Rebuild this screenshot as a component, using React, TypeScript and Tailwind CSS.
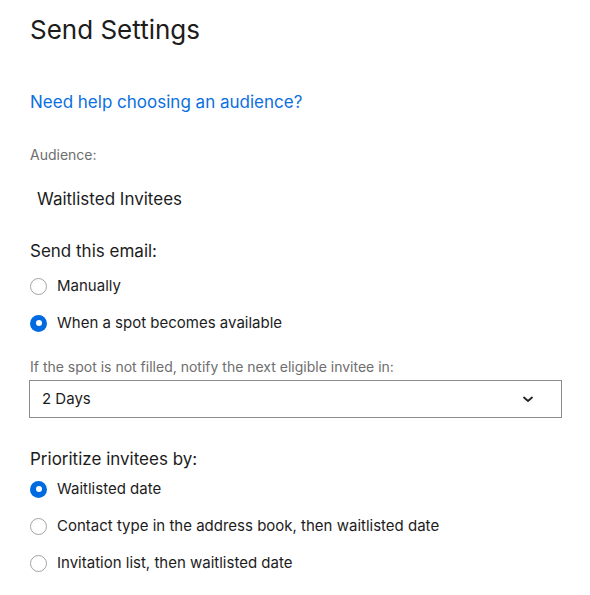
import { useState } from "react";

function Radio({ checked, label, onClick }: { checked: boolean; label: string; onClick: () => void }) {
  return (
    <label className="flex items-center gap-[10px] cursor-pointer h-[18px]" onClick={onClick}>
      {checked ? (
        <span className="w-[17px] h-[17px] rounded-full bg-[#006ae1] flex items-center justify-center shrink-0">
          <span className="w-[6px] h-[6px] rounded-full bg-white" />
        </span>
      ) : (
        <span className="w-[17px] h-[17px] rounded-full border border-[#a3a3a3] bg-white shrink-0" />
      )}
      <span className="text-[15px] text-[#1c1c1c]">{label}</span>
    </label>
  );
}

export default function App() {
  const [sendMode, setSendMode] = useState("spot");
  const [priority, setPriority] = useState("date");

  return (
    <div className="w-[590px] h-[595px] bg-white pl-[30px] pr-[28px] font-['Inter',sans-serif] text-[#1c1c1c]">
      <h1 className="pt-[14px] text-[26px] leading-[32px] font-normal">Send Settings</h1>

      <a href="#" className="block mt-[45px] text-[17px] leading-[22px] text-[#0b6fdf]">
        Need help choosing an audience?
      </a>

      <div className="mt-[33px] text-[14px] leading-[18px] text-[#6e6e6e]">Audience:</div>
      <div className="mt-[24px] pl-[7px] text-[17px] leading-[22px]">Waitlisted Invitees</div>

      <div className="mt-[30px] text-[17px] leading-[22px]">Send this email:</div>
      <div className="mt-[15px] flex flex-col gap-[19px]">
        <Radio checked={sendMode === "manual"} label="Manually" onClick={() => setSendMode("manual")} />
        <Radio checked={sendMode === "spot"} label="When a spot becomes available" onClick={() => setSendMode("spot")} />
      </div>

      <div className="mt-[26px] text-[14px] leading-[18px] text-[#6e6e6e]">
        If the spot is not filled, notify the next eligible invitee in:
      </div>
      <div className="mt-[4px] w-[533px] h-[38px] border border-[#8c8c8c] flex items-center justify-between pl-[12px] pr-[28px] -ml-[1px]">
        <span className="text-[15px]">2 Days</span>
        <svg width="10" height="7" viewBox="0 0 10 7" fill="none">
          <path d="M1 1.5 L5 5 L9 1.5" stroke="#222" strokeWidth="1.8" strokeLinecap="round" strokeLinejoin="round" />
        </svg>
      </div>

      <div className="mt-[30px] text-[17px] leading-[22px]">Prioritize invitees by:</div>
      <div className="mt-[10px] flex flex-col gap-[19px]">
        <Radio checked={priority === "date"} label="Waitlisted date" onClick={() => setPriority("date")} />
        <Radio
          checked={priority === "contact"}
          label="Contact type in the address book, then waitlisted date"
          onClick={() => setPriority("contact")}
        />
        <Radio
          checked={priority === "list"}
          label="Invitation list, then waitlisted date"
          onClick={() => setPriority("list")}
        />
      </div>
    </div>
  );
}
